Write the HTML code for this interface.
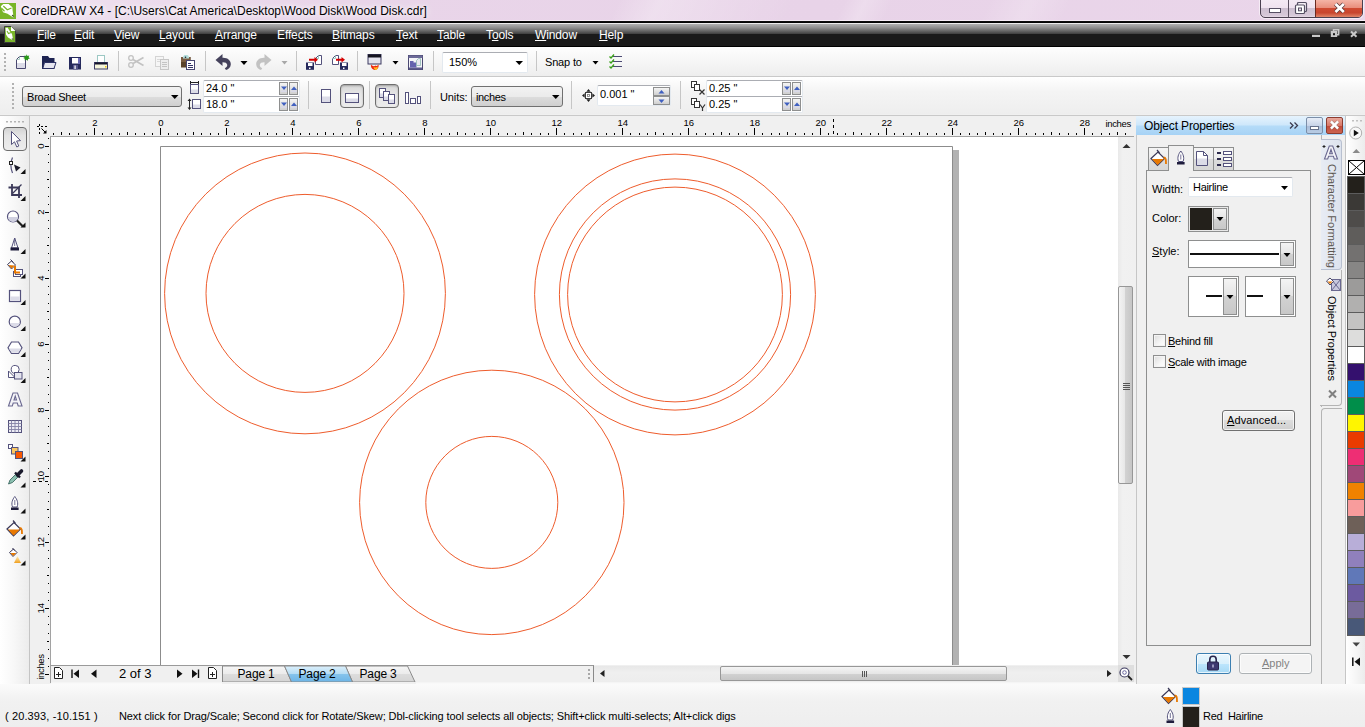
<!DOCTYPE html>
<html><head><meta charset="utf-8"><title>CorelDRAW X4</title>
<style>
*{box-sizing:border-box;margin:0;padding:0}
html,body{width:1365px;height:727px;overflow:hidden;background:#f0f0f0;font-family:"Liberation Sans",sans-serif;font-size:11px;color:#000}
.abs{position:absolute}
#title{position:absolute;left:0;top:0;width:1365px;height:21px;background:linear-gradient(115deg,rgba(255,255,255,0) 0,rgba(255,255,255,0) 45%,rgba(255,255,255,.28) 48%,rgba(255,255,255,.10) 54%,rgba(255,255,255,0) 58%,rgba(255,255,255,0) 61.500%,rgba(255,255,255,.22) 63%,rgba(255,255,255,0) 65%,rgba(255,255,255,0) 72%,rgba(255,255,255,.2) 75%,rgba(255,255,255,0) 78%),linear-gradient(90deg,#f2e6f2 0,#eddded 8%,#e9d5e9 25%,#e8d3e8 60%,#ead6ea 100%);border-bottom:1px solid #f6ecf6}
#title .t{position:absolute;left:21px;top:3.5px;font-size:12px;letter-spacing:0.01px;line-height:15px;white-space:nowrap;color:#000;text-shadow:0 0 5px #fff,0 0 8px #fff}
#menu{position:absolute;left:0;top:21px;width:1365px;height:26px;background:linear-gradient(#111 0,#000 2px,#ececec 2px,#ececec 3px,#b2b2b2 3px,#8c8c8c 7px,#3e3e3e 13px,#1a1a1a 13px,#1a1a1a 25px,#000 25px)}
#menu span{position:absolute;top:6.5px;color:#fff;font-size:12px;letter-spacing:-0.12px;line-height:15px;white-space:nowrap}
#menu u{text-decoration:underline;text-underline-offset:1px}
#tb1{position:absolute;left:0;top:47px;width:1365px;height:29px;background:linear-gradient(#fefefe,#f5f5f5 55%,#eeeeee)}
#tb2{position:absolute;left:0;top:76px;width:1365px;height:38px;background:linear-gradient(#ffffff,#f4f4f4 40%,#eeeeee);border-top:1px solid #c9c9c9}
#below{position:absolute;left:0;top:114px;width:1365px;height:2px;background:#f0f0f0;border-bottom:1px solid #c9c9c9}
.grip{position:absolute;width:3px;background-image:repeating-linear-gradient(#b4b4b4 0,#b4b4b4 2px,transparent 2px,transparent 4px)}
.sep{position:absolute;width:1px;background:#c6c6c6}
.combo{position:absolute;background:#fff;border:1px solid #e3e9ef;border-top-color:#abadb3;border-radius:2px}
.btncombo{position:absolute;border:1px solid #707070;border-radius:3px;background:linear-gradient(#f2f2f2,#ebebeb 50%,#dddddd 50%,#cfcfcf)}
.txt{position:absolute;white-space:nowrap;line-height:13px}
.arr{position:absolute;width:0;height:0;border-left:4px solid transparent;border-right:4px solid transparent;border-top:4px solid #000}
#toolbox{position:absolute;left:0;top:116px;width:30px;height:568px;background:linear-gradient(90deg,#ffffff,#f8f8f8 45%,#ececec);border-right:1px solid #c4c4c4}
#workarea{position:absolute;left:51px;top:137px;width:1067px;height:528px;background:#fff}
#canvas{position:absolute;left:0;top:0;width:1365px;height:727px;pointer-events:none}
#status{position:absolute;left:0;top:684px;width:1365px;height:43px;background:linear-gradient(#fbfbfb,#f1f1f1 40%,#eeeeee)}
#palettebg{position:absolute;left:1345px;top:116px;width:20px;height:568px;background:linear-gradient(90deg,#ffffff,#f6f6f6 50%,#ececec);border-left:1px solid #c6c6c6}
#palette{position:absolute;left:1347px;top:176px;width:18px;height:460px}
.spin{position:absolute;width:9px;height:13px;border:1px solid #8e8f8f;background:linear-gradient(#f4f4f4,#e2e2e2 50%,#cfcfcf)}
.spinh{position:absolute;width:17px;height:9px;border:1px solid #8e8f8f;background:linear-gradient(#f4f4f4,#e2e2e2 50%,#cfcfcf)}
.pressed{position:absolute;border:1px solid #6e6e6e;border-radius:4px;background:linear-gradient(#d6d6d6,#e6e6e6 40%,#ececec);box-shadow:inset 0 1px 2px rgba(0,0,0,.25)}
#vscroll{position:absolute;left:1118px;top:137px;width:16px;height:528px;background:linear-gradient(90deg,#e9e9e9,#f1f1f1 30%,#f0f0f0)}
#vthumb{position:absolute;left:0;top:149px;width:15px;height:198px;border:1px solid #979797;border-radius:2px;background:linear-gradient(90deg,#f4f4f4,#e6e6e6 50%,#d2d2d2 50%,#c6c6c6)}
#hscroll{position:absolute;left:594px;top:666px;width:524px;height:16px;background:linear-gradient(#e8e8e8,#efefef 40%,#ededed)}
#hthumb{position:absolute;left:126px;top:0px;width:287px;height:15px;border:1px solid #979797;border-radius:2px;background:linear-gradient(#f4f4f4,#e6e6e6 50%,#d2d2d2 50%,#c6c6c6)}
#pagenav{position:absolute;left:51px;top:665px;width:543px;height:17px;background:#f0f0f0;border-top:1px solid #9a9a9a;border-right:1px solid #8a8a8a}
#navcorner{position:absolute;left:1118px;top:665px;width:16px;height:17px;background:#dedede}
.ptxt{position:absolute;top:667px;font-size:12px;line-height:14px;white-space:nowrap}
#docker{position:absolute;left:1136px;top:116px;width:210px;height:568px;background:#f0f0f0}
#dhead{position:absolute;left:0;top:0;width:210px;height:19px;background:linear-gradient(#e6f3fd,#cfe8fb 45%,#b4dbf8 55%,#a6d2f5)}
#dhead .t{position:absolute;left:8px;top:2.700px;letter-spacing:-0.14px;font-size:12px;line-height:15px;white-space:nowrap}
#dpanel{position:absolute;left:10px;top:54px;width:165px;height:476px;border:1px solid #8e8f8f;background:#f0f0f0}
.dtab{position:absolute;border:1px solid #8e8f8f;border-bottom:none;background:linear-gradient(#f4f4f4,#ececec 50%,#dcdcdc 50%,#d6d6d6)}
.dlabel{position:absolute;white-space:nowrap;line-height:13px;font-size:11px}
.wcombo{position:absolute;background:#fff;border:1px solid #e3e9ef;border-top-color:#abadb3;border-radius:2px}
.wbox{position:absolute;background:#fff;border:1px solid #8e8f8f}
.ddbtn{position:absolute;border:1px solid #8e8f8f;background:linear-gradient(#f4f4f4,#e4e4e4 50%,#d2d2d2 50%,#c8c8c8)}
.chk{position:absolute;width:13px;height:13px;border:1px solid #8e8f8f;background:linear-gradient(135deg,#dcdcdc,#f6f6f6 60%,#fff);box-shadow:inset 0 0 0 1px #f4f4f4}
.btn{position:absolute;border:1px solid #707070;border-radius:3px;background:linear-gradient(#f2f2f2,#ebebeb 50%,#dddddd 50%,#cfcfcf);box-shadow:inset 0 0 0 1px rgba(255,255,255,.7)}
#vtabs{position:absolute;left:1321px;top:135px;width:25px;height:549px;background:#f0f0f0}
.vtxt{position:absolute;white-space:nowrap;font-size:11px;line-height:12px;transform-origin:0 0;transform:rotate(90deg)}
</style></head>
<body>
<div id="title"><div class="abs" style="left:1260px;top:-1px;width:103px;height:19px;border:1px solid #4a4050;border-radius:0 0 5px 5px;background:linear-gradient(#f4eaf4,#efe2ef 48%,#cdbfd0 50%,#d6c8d8 90%,#e6dae6);box-shadow:0 0 0 1px rgba(255,255,255,.55)"></div>
<div class="abs" style="left:1315px;top:0;width:47px;height:17px;border-radius:0 0 4px 0;background:linear-gradient(#f4b4a6,#e88c7a 48%,#cf4a32 50%,#c8452e 75%,#e08468)"></div>
<div class="abs" style="left:1288px;top:0;width:1px;height:17px;background:#5a5060"></div>
<div class="abs" style="left:1315px;top:0;width:1px;height:17px;background:#6a2a20"></div>
<div class="t">CorelDRAW X4 - [C:\Users\Cat America\Desktop\Wood Disk\Wood Disk.cdr]</div></div>
<div id="menu">
<span style="left:37px"><u>F</u>ile</span>
<span style="left:74px"><u>E</u>dit</span>
<span style="left:114px"><u>V</u>iew</span>
<span style="left:159px"><u>L</u>ayout</span>
<span style="left:215px"><u>A</u>rrange</span>
<span style="left:277px">Effe<u>c</u>ts</span>
<span style="left:332px"><u>B</u>itmaps</span>
<span style="left:396px"><u>T</u>ext</span>
<span style="left:437px"><u>T</u>able</span>
<span style="left:486px">T<u>o</u>ols</span>
<span style="left:535px"><u>W</u>indow</span>
<span style="left:599px"><u>H</u>elp</span>
</div>
<div id="tb1">
<div class="sep" style="left:118px;top:4px;height:20px"></div>
<div class="sep" style="left:205px;top:4px;height:20px"></div>
<div class="sep" style="left:296px;top:4px;height:20px"></div>
<div class="sep" style="left:357px;top:4px;height:20px"></div>
<div class="sep" style="left:433px;top:4px;height:20px"></div>
<div class="sep" style="left:536px;top:4px;height:20px"></div>
<div class="combo" style="left:442px;top:5px;width:86px;height:21px"></div>
<div class="txt" style="left:449px;top:9px">150%</div>
<div class="txt" style="letter-spacing:-0.17px;left:545px;top:9px">Snap to</div>
</div>
<div id="tb2">
<div class="btncombo" style="left:22px;top:9px;width:160px;height:21px"></div>
<div class="txt" style="letter-spacing:-0.2px;left:27px;top:13.5px">Broad Sheet</div>
<div class="combo" style="left:203px;top:3px;width:97px;height:17px"></div>
<div class="combo" style="left:203px;top:19px;width:97px;height:17px"></div>
<div class="txt" style="left:206px;top:5px">24.0 "</div>
<div class="txt" style="left:206px;top:21px">18.0 "</div>
<div class="spin" style="left:279px;top:5px"></div><div class="spin" style="left:289px;top:5px"></div>
<div class="spin" style="left:279px;top:21px"></div><div class="spin" style="left:289px;top:21px"></div>
<div class="sep" style="left:308px;top:4px;height:28px"></div>
<div class="pressed" style="left:340px;top:7px;width:24px;height:24px"></div>
<div class="sep" style="left:369px;top:4px;height:28px"></div>
<div class="pressed" style="left:375px;top:7px;width:24px;height:24px"></div>
<div class="sep" style="left:430px;top:4px;height:28px"></div>
<div class="txt" style="letter-spacing:-0.1px;left:440px;top:13.5px">Units:</div>
<div class="btncombo" style="left:471px;top:9px;width:92px;height:21px"></div>
<div class="txt" style="letter-spacing:-0.35px;left:476px;top:13.5px">inches</div>
<div class="sep" style="left:571px;top:4px;height:28px"></div>
<div class="combo" style="left:597px;top:8px;width:74px;height:21px"></div>
<div class="txt" style="left:600px;top:11px">0.001 "</div>
<div class="spinh" style="left:653px;top:10px"></div><div class="spinh" style="left:653px;top:19px"></div>
<div class="sep" style="left:680px;top:4px;height:28px"></div>
<div class="combo" style="left:706px;top:3px;width:97px;height:17px"></div>
<div class="combo" style="left:706px;top:19px;width:97px;height:17px"></div>
<div class="txt" style="left:709px;top:5px">0.25 "</div>
<div class="txt" style="left:709px;top:21px">0.25 "</div>
<div class="spin" style="left:782px;top:5px"></div><div class="spin" style="left:792px;top:5px"></div>
<div class="spin" style="left:782px;top:21px"></div><div class="spin" style="left:792px;top:21px"></div>
</div>
<div id="below"></div>
<div id="toolbox"></div>
<div id="workarea"></div>
<div id="vscroll"><div id="vthumb"></div></div>
<div id="pagenav"></div>
<div id="hscroll"><div id="hthumb"></div></div>
<div id="navcorner"></div>
<div class="abs" style="left:51px;top:682px;width:1085px;height:2px;background:linear-gradient(#f3f3f3,#fbfbfb)"></div>
<div class="ptxt" style="left:119px;font-size:13px;top:666px;line-height:15px">2 of 3</div>
<div id="docker">
<div id="dhead"><div class="t">Object Properties</div>
<div class="abs" style="left:170px;top:1px;width:17px;height:17px;border:1px solid #7b8ea8;border-radius:2px;background:linear-gradient(#e8eef8,#c8d4e8 50%,#a8bcd8 50%,#b8cce4)"></div>
<div class="abs" style="left:174px;top:10px;width:9px;height:4px;background:#fff;border:1px solid #66728c"></div>
<div class="abs" style="left:190px;top:1px;width:17px;height:17px;border:1px solid #8c3c30;border-radius:2px;background:linear-gradient(#e8a89c,#d87868 50%,#c04838 50%,#cc6450)"></div>
</div>
<div class="abs" style="left:0px;top:19px;width:1px;height:549px;background:#c6c6c6"></div>
<div class="dtab" style="left:12px;top:31px;width:21px;height:24px"></div>
<div class="dtab" style="left:57px;top:31px;width:21px;height:24px"></div>
<div class="dtab" style="left:77px;top:31px;width:21px;height:24px"></div>
<div id="dpanel"></div>
<div class="abs" style="left:32px;top:29px;width:26px;height:26px;border:1px solid #8e8f8f;border-bottom:none;background:#f0f0f0"></div>
<div class="dlabel" style="left:16px;top:66.700px">Width:</div>
<div class="wcombo" style="left:52px;top:61px;width:105px;height:20px"></div>
<div class="dlabel" style="letter-spacing:-0.3px;left:57px;top:65px">Hairline</div>
<div class="dlabel" style="left:16px;top:96px">Color:</div>
<div class="wbox" style="left:52px;top:90px;width:41px;height:26px;background:#e8e8e8"></div>
<div class="abs" style="left:54px;top:92px;width:22px;height:22px;background:#23201b"></div>
<div class="ddbtn" style="left:77px;top:92px;width:14px;height:22px"></div>
<div class="dlabel" style="left:16px;top:129px"><u>S</u>tyle:</div>
<div class="wbox" style="left:52px;top:124px;width:108px;height:28px"></div>
<div class="abs" style="left:54px;top:137px;width:89px;height:2px;background:#111"></div>
<div class="ddbtn" style="left:144px;top:126px;width:14px;height:24px"></div>
<div class="wbox" style="left:52px;top:160px;width:51px;height:41px"></div>
<div class="abs" style="left:70px;top:179px;width:16px;height:2px;background:#111"></div>
<div class="ddbtn" style="left:87px;top:162px;width:14px;height:37px"></div>
<div class="wbox" style="left:109px;top:160px;width:51px;height:41px"></div>
<div class="abs" style="left:111px;top:179px;width:16px;height:2px;background:#111"></div>
<div class="ddbtn" style="left:144px;top:162px;width:14px;height:37px"></div>
<div class="chk" style="left:17px;top:218px"></div>
<div class="dlabel" style="letter-spacing:-0.27px;left:32px;top:219px"><u>B</u>ehind fill</div>
<div class="chk" style="left:17px;top:239px"></div>
<div class="dlabel" style="letter-spacing:-0.29px;left:32px;top:240px"><u>S</u>cale with image</div>
<div class="btn" style="left:86px;top:294px;width:73px;height:21px"></div>
<div class="dlabel" style="letter-spacing:0.1px;left:91px;top:298px"><u>A</u>dvanced...</div>
<div class="btn" style="left:60px;top:537px;width:35px;height:21px;border-color:#3c7fb1;background:linear-gradient(#eaf6fd,#d9f0fc 50%,#bee6fd 50%,#a7d9f5)"></div>
<div class="btn" style="left:103px;top:537px;width:73px;height:21px;border-color:#adb2b5;background:#f4f4f4"></div>
<div class="dlabel" style="left:126px;top:541px;color:#838383"><u>A</u>pply</div>
</div>
<div id="vtabs">
<div class="abs" style="left:0;top:0;width:1px;height:272px;background:#b4b4b4"></div>
<div class="abs" style="left:0;top:4px;width:21px;height:131px;border:1px solid #b8c0d0;border-left:none;border-radius:0 4px 4px 0;background:linear-gradient(90deg,#e8ecf4,#dde3ee)"></div>
<div class="abs" style="left:-1px;top:135px;width:22px;height:136px;border:1px solid #b4b4b4;border-left:none;border-top:none;border-radius:0 0 4px 0;background:#f0f0f0"></div>
<div class="abs" style="left:0;top:273px;width:21px;height:300px;border:1px solid #b4b4b4;border-right:none;border-bottom:none;border-radius:4px 0 0 0"></div>
<div class="vtxt" style="left:17px;top:29px;color:#5c5650">Character Formatting</div>
<div class="vtxt" style="left:17px;top:161px">Object Properties</div>
</div>

<div id="palettebg"></div>
<div id="palette">
<div style="position:absolute;left:0;top:0px;width:18px;height:18px;border:1px solid #5c5c5c;background:#23201b"></div>
<div style="position:absolute;left:0;top:17px;width:18px;height:18px;border:1px solid #5c5c5c;background:#3b3936"></div>
<div style="position:absolute;left:0;top:34px;width:18px;height:18px;border:1px solid #5c5c5c;background:#4e4c4a"></div>
<div style="position:absolute;left:0;top:51px;width:18px;height:18px;border:1px solid #5c5c5c;background:#5f5d5b"></div>
<div style="position:absolute;left:0;top:68px;width:18px;height:18px;border:1px solid #5c5c5c;background:#737170"></div>
<div style="position:absolute;left:0;top:85px;width:18px;height:18px;border:1px solid #5c5c5c;background:#878685"></div>
<div style="position:absolute;left:0;top:102px;width:18px;height:18px;border:1px solid #5c5c5c;background:#9c9b9a"></div>
<div style="position:absolute;left:0;top:119px;width:18px;height:18px;border:1px solid #5c5c5c;background:#b1b0af"></div>
<div style="position:absolute;left:0;top:136px;width:18px;height:18px;border:1px solid #5c5c5c;background:#c4c3c2"></div>
<div style="position:absolute;left:0;top:153px;width:18px;height:18px;border:1px solid #5c5c5c;background:#dddddc"></div>
<div style="position:absolute;left:0;top:170px;width:18px;height:18px;border:1px solid #5c5c5c;background:#ffffff"></div>
<div style="position:absolute;left:0;top:187px;width:18px;height:18px;border:1px solid #5c5c5c;background:#34106e"></div>
<div style="position:absolute;left:0;top:204px;width:18px;height:18px;border:1px solid #5c5c5c;background:#0a86e0"></div>
<div style="position:absolute;left:0;top:221px;width:18px;height:18px;border:1px solid #5c5c5c;background:#008e4a"></div>
<div style="position:absolute;left:0;top:238px;width:18px;height:18px;border:1px solid #5c5c5c;background:#fff500"></div>
<div style="position:absolute;left:0;top:255px;width:18px;height:18px;border:1px solid #5c5c5c;background:#ea3b00"></div>
<div style="position:absolute;left:0;top:272px;width:18px;height:18px;border:1px solid #5c5c5c;background:#ee2e74"></div>
<div style="position:absolute;left:0;top:289px;width:18px;height:18px;border:1px solid #5c5c5c;background:#a04878"></div>
<div style="position:absolute;left:0;top:306px;width:18px;height:18px;border:1px solid #5c5c5c;background:#f08200"></div>
<div style="position:absolute;left:0;top:323px;width:18px;height:18px;border:1px solid #5c5c5c;background:#f89c9c"></div>
<div style="position:absolute;left:0;top:340px;width:18px;height:18px;border:1px solid #5c5c5c;background:#6e6058"></div>
<div style="position:absolute;left:0;top:357px;width:18px;height:18px;border:1px solid #5c5c5c;background:#b8aed8"></div>
<div style="position:absolute;left:0;top:374px;width:18px;height:18px;border:1px solid #5c5c5c;background:#9080bc"></div>
<div style="position:absolute;left:0;top:391px;width:18px;height:18px;border:1px solid #5c5c5c;background:#6078b8"></div>
<div style="position:absolute;left:0;top:408px;width:18px;height:18px;border:1px solid #5c5c5c;background:#6c5aa0"></div>
<div style="position:absolute;left:0;top:425px;width:18px;height:18px;border:1px solid #5c5c5c;background:#786c98"></div>
<div style="position:absolute;left:0;top:442px;width:18px;height:18px;border:1px solid #5c5c5c;background:#485878"></div>
</div>
<div id="status">
<div class="txt" style="letter-spacing:0.12px;left:5px;top:26px">( 20.393, -10.151 )</div>
<div class="txt" style="letter-spacing:-0.108px;left:119px;top:26px">Next click for Drag/Scale; Second click for Rotate/Skew; Dbl-clicking tool selects all objects; Shift+click multi-selects; Alt+click digs</div>
<div class="txt" style="left:1203px;top:26px;letter-spacing:-0.28px">Red&nbsp; Hairline</div>
</div>

<svg id="canvas" width="1365" height="727" viewBox="0 0 1365 727">
<!-- rulers -->
<rect x="31" y="116" width="1103" height="20" fill="#f0f0f0"/>
<rect x="31" y="116" width="19" height="568" fill="#f0f0f0"/>
<rect x="50" y="136" width="1084" height="1" fill="#a2a2a2"/>
<rect x="50" y="136" width="1" height="547" fill="#a2a2a2"/>
<g fill="#000" shape-rendering="crispEdges">
<rect x="53" y="133" width="1" height="2"/>
<rect x="61" y="132" width="1" height="3"/>
<rect x="69" y="133" width="1" height="2"/>
<rect x="78" y="133" width="1" height="2"/>
<rect x="86" y="133" width="1" height="2"/>
<rect x="94" y="128" width="1" height="7"/>
<rect x="102" y="133" width="1" height="2"/>
<rect x="111" y="133" width="1" height="2"/>
<rect x="119" y="133" width="1" height="2"/>
<rect x="127" y="132" width="1" height="3"/>
<rect x="135" y="133" width="1" height="2"/>
<rect x="144" y="133" width="1" height="2"/>
<rect x="152" y="133" width="1" height="2"/>
<rect x="160" y="128" width="1" height="7"/>
<rect x="168" y="133" width="1" height="2"/>
<rect x="177" y="133" width="1" height="2"/>
<rect x="185" y="133" width="1" height="2"/>
<rect x="193" y="132" width="1" height="3"/>
<rect x="201" y="133" width="1" height="2"/>
<rect x="210" y="133" width="1" height="2"/>
<rect x="218" y="133" width="1" height="2"/>
<rect x="226" y="128" width="1" height="7"/>
<rect x="234" y="133" width="1" height="2"/>
<rect x="243" y="133" width="1" height="2"/>
<rect x="251" y="133" width="1" height="2"/>
<rect x="259" y="132" width="1" height="3"/>
<rect x="267" y="133" width="1" height="2"/>
<rect x="276" y="133" width="1" height="2"/>
<rect x="284" y="133" width="1" height="2"/>
<rect x="292" y="128" width="1" height="7"/>
<rect x="300" y="133" width="1" height="2"/>
<rect x="309" y="133" width="1" height="2"/>
<rect x="317" y="133" width="1" height="2"/>
<rect x="325" y="132" width="1" height="3"/>
<rect x="333" y="133" width="1" height="2"/>
<rect x="342" y="133" width="1" height="2"/>
<rect x="350" y="133" width="1" height="2"/>
<rect x="358" y="128" width="1" height="7"/>
<rect x="366" y="133" width="1" height="2"/>
<rect x="375" y="133" width="1" height="2"/>
<rect x="383" y="133" width="1" height="2"/>
<rect x="391" y="132" width="1" height="3"/>
<rect x="399" y="133" width="1" height="2"/>
<rect x="408" y="133" width="1" height="2"/>
<rect x="416" y="133" width="1" height="2"/>
<rect x="424" y="128" width="1" height="7"/>
<rect x="432" y="133" width="1" height="2"/>
<rect x="441" y="133" width="1" height="2"/>
<rect x="449" y="133" width="1" height="2"/>
<rect x="457" y="132" width="1" height="3"/>
<rect x="465" y="133" width="1" height="2"/>
<rect x="474" y="133" width="1" height="2"/>
<rect x="482" y="133" width="1" height="2"/>
<rect x="490" y="128" width="1" height="7"/>
<rect x="498" y="133" width="1" height="2"/>
<rect x="507" y="133" width="1" height="2"/>
<rect x="515" y="133" width="1" height="2"/>
<rect x="523" y="132" width="1" height="3"/>
<rect x="531" y="133" width="1" height="2"/>
<rect x="540" y="133" width="1" height="2"/>
<rect x="548" y="133" width="1" height="2"/>
<rect x="556" y="128" width="1" height="7"/>
<rect x="564" y="133" width="1" height="2"/>
<rect x="573" y="133" width="1" height="2"/>
<rect x="581" y="133" width="1" height="2"/>
<rect x="589" y="132" width="1" height="3"/>
<rect x="597" y="133" width="1" height="2"/>
<rect x="606" y="133" width="1" height="2"/>
<rect x="614" y="133" width="1" height="2"/>
<rect x="622" y="128" width="1" height="7"/>
<rect x="630" y="133" width="1" height="2"/>
<rect x="639" y="133" width="1" height="2"/>
<rect x="647" y="133" width="1" height="2"/>
<rect x="655" y="132" width="1" height="3"/>
<rect x="663" y="133" width="1" height="2"/>
<rect x="672" y="133" width="1" height="2"/>
<rect x="680" y="133" width="1" height="2"/>
<rect x="688" y="128" width="1" height="7"/>
<rect x="696" y="133" width="1" height="2"/>
<rect x="705" y="133" width="1" height="2"/>
<rect x="713" y="133" width="1" height="2"/>
<rect x="721" y="132" width="1" height="3"/>
<rect x="729" y="133" width="1" height="2"/>
<rect x="738" y="133" width="1" height="2"/>
<rect x="746" y="133" width="1" height="2"/>
<rect x="754" y="128" width="1" height="7"/>
<rect x="762" y="133" width="1" height="2"/>
<rect x="771" y="133" width="1" height="2"/>
<rect x="779" y="133" width="1" height="2"/>
<rect x="787" y="132" width="1" height="3"/>
<rect x="795" y="133" width="1" height="2"/>
<rect x="804" y="133" width="1" height="2"/>
<rect x="812" y="133" width="1" height="2"/>
<rect x="820" y="128" width="1" height="7"/>
<rect x="828" y="133" width="1" height="2"/>
<rect x="837" y="133" width="1" height="2"/>
<rect x="845" y="133" width="1" height="2"/>
<rect x="853" y="132" width="1" height="3"/>
<rect x="861" y="133" width="1" height="2"/>
<rect x="870" y="133" width="1" height="2"/>
<rect x="878" y="133" width="1" height="2"/>
<rect x="886" y="128" width="1" height="7"/>
<rect x="894" y="133" width="1" height="2"/>
<rect x="903" y="133" width="1" height="2"/>
<rect x="911" y="133" width="1" height="2"/>
<rect x="919" y="132" width="1" height="3"/>
<rect x="927" y="133" width="1" height="2"/>
<rect x="936" y="133" width="1" height="2"/>
<rect x="944" y="133" width="1" height="2"/>
<rect x="952" y="128" width="1" height="7"/>
<rect x="960" y="133" width="1" height="2"/>
<rect x="969" y="133" width="1" height="2"/>
<rect x="977" y="133" width="1" height="2"/>
<rect x="985" y="132" width="1" height="3"/>
<rect x="993" y="133" width="1" height="2"/>
<rect x="1002" y="133" width="1" height="2"/>
<rect x="1010" y="133" width="1" height="2"/>
<rect x="1018" y="128" width="1" height="7"/>
<rect x="1026" y="133" width="1" height="2"/>
<rect x="1035" y="133" width="1" height="2"/>
<rect x="1043" y="133" width="1" height="2"/>
<rect x="1051" y="132" width="1" height="3"/>
<rect x="1059" y="133" width="1" height="2"/>
<rect x="1068" y="133" width="1" height="2"/>
<rect x="1076" y="133" width="1" height="2"/>
<rect x="1084" y="128" width="1" height="7"/>
<rect x="1092" y="133" width="1" height="2"/>
<rect x="1101" y="133" width="1" height="2"/>
<rect x="1109" y="133" width="1" height="2"/>
<rect x="1117" y="132" width="1" height="3"/>
<rect x="1125" y="133" width="1" height="2"/>
<rect x="48" y="138" width="1" height="1"/>
<rect x="45" y="146" width="4" height="1"/>
<rect x="48" y="154" width="1" height="1"/>
<rect x="48" y="162" width="1" height="1"/>
<rect x="48" y="171" width="1" height="1"/>
<rect x="47" y="179" width="2" height="1"/>
<rect x="48" y="187" width="1" height="1"/>
<rect x="48" y="196" width="1" height="1"/>
<rect x="48" y="204" width="1" height="1"/>
<rect x="45" y="212" width="4" height="1"/>
<rect x="48" y="220" width="1" height="1"/>
<rect x="48" y="228" width="1" height="1"/>
<rect x="48" y="237" width="1" height="1"/>
<rect x="47" y="245" width="2" height="1"/>
<rect x="48" y="253" width="1" height="1"/>
<rect x="48" y="262" width="1" height="1"/>
<rect x="48" y="270" width="1" height="1"/>
<rect x="45" y="278" width="4" height="1"/>
<rect x="48" y="286" width="1" height="1"/>
<rect x="48" y="294" width="1" height="1"/>
<rect x="48" y="303" width="1" height="1"/>
<rect x="47" y="311" width="2" height="1"/>
<rect x="48" y="319" width="1" height="1"/>
<rect x="48" y="328" width="1" height="1"/>
<rect x="48" y="336" width="1" height="1"/>
<rect x="45" y="344" width="4" height="1"/>
<rect x="48" y="352" width="1" height="1"/>
<rect x="48" y="360" width="1" height="1"/>
<rect x="48" y="369" width="1" height="1"/>
<rect x="47" y="377" width="2" height="1"/>
<rect x="48" y="385" width="1" height="1"/>
<rect x="48" y="394" width="1" height="1"/>
<rect x="48" y="402" width="1" height="1"/>
<rect x="45" y="410" width="4" height="1"/>
<rect x="48" y="418" width="1" height="1"/>
<rect x="48" y="426" width="1" height="1"/>
<rect x="48" y="435" width="1" height="1"/>
<rect x="47" y="443" width="2" height="1"/>
<rect x="48" y="451" width="1" height="1"/>
<rect x="48" y="460" width="1" height="1"/>
<rect x="48" y="468" width="1" height="1"/>
<rect x="45" y="476" width="4" height="1"/>
<rect x="48" y="484" width="1" height="1"/>
<rect x="48" y="492" width="1" height="1"/>
<rect x="48" y="501" width="1" height="1"/>
<rect x="47" y="509" width="2" height="1"/>
<rect x="48" y="517" width="1" height="1"/>
<rect x="48" y="526" width="1" height="1"/>
<rect x="48" y="534" width="1" height="1"/>
<rect x="45" y="542" width="4" height="1"/>
<rect x="48" y="550" width="1" height="1"/>
<rect x="48" y="558" width="1" height="1"/>
<rect x="48" y="567" width="1" height="1"/>
<rect x="47" y="575" width="2" height="1"/>
<rect x="48" y="583" width="1" height="1"/>
<rect x="48" y="592" width="1" height="1"/>
<rect x="48" y="600" width="1" height="1"/>
<rect x="45" y="608" width="4" height="1"/>
<rect x="48" y="616" width="1" height="1"/>
<rect x="48" y="624" width="1" height="1"/>
<rect x="48" y="633" width="1" height="1"/>
<rect x="47" y="641" width="2" height="1"/>
<rect x="48" y="649" width="1" height="1"/>
<rect x="48" y="658" width="1" height="1"/>
<rect x="48" y="666" width="1" height="1"/>
<rect x="45" y="674" width="4" height="1"/>
</g>
<g font-family="Liberation Sans, sans-serif" font-size="9.5" text-anchor="middle" fill="#000">
<text x="94.8" y="126.4">2</text>
<text x="160.8" y="126.4">0</text>
<text x="226.8" y="126.4">2</text>
<text x="292.8" y="126.4">4</text>
<text x="358.8" y="126.4">6</text>
<text x="424.8" y="126.4">8</text>
<text x="490.8" y="126.4">10</text>
<text x="556.8" y="126.4">12</text>
<text x="622.8" y="126.4">14</text>
<text x="688.8" y="126.4">16</text>
<text x="754.8" y="126.4">18</text>
<text x="820.8" y="126.4">20</text>
<text x="886.8" y="126.4">22</text>
<text x="952.8" y="126.4">24</text>
<text x="1018.8" y="126.4">26</text>
<text x="1084.8" y="126.4">28</text>
<text transform="translate(43.8,146.2) rotate(-90)" x="0" y="0">0</text>
<text transform="translate(43.8,212.2) rotate(-90)" x="0" y="0">2</text>
<text transform="translate(43.8,278.2) rotate(-90)" x="0" y="0">4</text>
<text transform="translate(43.8,344.2) rotate(-90)" x="0" y="0">6</text>
<text transform="translate(43.8,410.2) rotate(-90)" x="0" y="0">8</text>
<text transform="translate(43.8,476.2) rotate(-90)" x="0" y="0">10</text>
<text transform="translate(43.8,542.2) rotate(-90)" x="0" y="0">12</text>
<text transform="translate(43.8,608.2) rotate(-90)" x="0" y="0">14</text>
</g>

<!-- ===== toolbar1 icons ===== -->
<g id="tb1icons">
<g fill="#b2b2b2"><rect x="4" y="53" width="2" height="2"/><rect x="4" y="57" width="2" height="2"/><rect x="4" y="61" width="2" height="2"/><rect x="4" y="65" width="2" height="2"/><rect x="4" y="69" width="2" height="2"/></g>
<!-- new -->
<path d="M19.5 56.5 H25.5 V68.5 H16.5 V59.5 Z" fill="#fff" stroke="#4a4870"/>
<rect x="17" y="63" width="8" height="5" fill="#dcdce8"/>
<path d="M16.5 59.5 H19.5 V56.5" fill="none" stroke="#a8c8c0"/>
<path d="M26.5 54.3 l1 1.6 1.8-.4 -.7 1.7 1.3 1.3 -1.8.4 -.3 1.8 -1.5-1 -1.6.9 .1-1.8 -1.6-.9 1.6-.8 -.1-1.8 1.4 1z" fill="#2a9818"/>
<!-- open -->
<path d="M42 56 h6 l1.5 2 h5 v11 h-12.5 z" fill="#1e2452"/>
<path d="M44.5 62.5 H56 L54 68.5 H42.8 Z" fill="#e6e6f0" stroke="#2c3164" stroke-width="1"/>
<!-- save -->
<rect x="69" y="57" width="12" height="12.5" fill="#25295c"/>
<rect x="78" y="58" width="2" height="6" fill="#6c6ab4"/>
<rect x="72" y="58" width="6" height="5.5" fill="#fff"/>
<rect x="73" y="65" width="5" height="4.5" fill="#54548a"/>
<rect x="74.5" y="65.5" width="1.2" height="3.5" fill="#fff"/>
<!-- print -->
<rect x="97.5" y="55.5" width="7" height="8" fill="#fff" stroke="#9cc8c4"/>
<rect x="94.5" y="62.5" width="13" height="6.5" fill="#f6f6dc" stroke="#3c3c64"/>
<rect x="95" y="62.5" width="12" height="2" fill="#16162c"/>
<rect x="105" y="66" width="1.5" height="1.5" fill="#f0c800"/>
<!-- cut (disabled) -->
<g fill="none" stroke="#c2c2c2" stroke-width="1.3"><circle cx="131" cy="58" r="2.3"/><circle cx="131" cy="65" r="2.3"/><path d="M133 59.5 L143.5 65.5 M133 63.5 L143.5 57.5" stroke-width="1.6"/></g>
<!-- copy (disabled) -->
<rect x="155.5" y="56.500" width="8" height="10" fill="#f6f6f6" stroke="#d4d4d4"/>
<rect x="160.500" y="59.500" width="8" height="10" fill="#ededed" stroke="#c6c6c6"/>
<path d="M162 62.500h5M162 64.500h5M162 66.500h5" stroke="#c4c4c4"/>
<path d="M157 59.500h3M157 61.500h3" stroke="#dadada"/>
<!-- paste -->
<rect x="181" y="57" width="9.5" height="10.5" fill="#5a432c"/>
<rect x="181" y="57" width="9.5" height="5" fill="#7a5c42"/>
<path d="M183 58.500 v-2 l1.500-1.500 h3 l1.500 1.500 v2 z" fill="#b4deda"/>
<circle cx="185.500" cy="57.300" r="0.800" fill="#223"/>
<rect x="186.500" y="60.500" width="8" height="9" fill="#fff" stroke="#4a4872"/>
<path d="M188 63.500h3M188 65.500h5M188 67.500h5" stroke="#333366"/>
<!-- undo -->
<path d="M215.500 60 L222.500 54 V57.800 C227.500 57.500 231 60.500 230.800 64.500 C230.600 67.300 228.600 69.200 226 69.900 L224.800 68.300 C226.600 67.500 227.400 66.200 227.200 64.800 C226.900 63 225 62.200 222.500 62.300 V66 Z" fill="#45425c"/>
<path d="M240.500 61 h7 l-3.500 4 z" fill="#000"/>
<!-- redo (disabled) -->
<path d="M271.500 60 L264.500 54 V57.800 C259.500 57.500 256 60.500 256.200 64.500 C256.400 67.300 258.400 69.200 261 69.900 L262.200 68.300 C260.400 67.500 259.600 66.200 259.800 64.800 C260.100 63 262 62.200 264.500 62.300 V66 Z" fill="#c2c2c2"/>
<path d="M281.500 61 h6 l-3 3.500 z" fill="#a8a8a8"/>
<!-- import -->
<path d="M318.500 55.500 H321.500 V64.500 H315.500 V58.500 Z" fill="#fff" stroke="#54527c"/>
<path d="M315.500 58.500 h3 v-3" fill="none" stroke="#9cc8c0"/>
<rect x="306" y="62.500" width="8" height="7.300" fill="#25295c"/>
<rect x="308" y="63" width="4.500" height="3" fill="#fff"/>
<rect x="309" y="67.500" width="1.500" height="1.500" fill="#fff"/>
<path d="M309 58.800 H314.500 V57 L318 59.800 L314.500 62.600 V60.800 H309 Z" fill="#d40000"/>
<!-- export -->
<path d="M335.500 55.500 H338.500 V64.500 H332.500 V58.500 Z" fill="#fff" stroke="#54527c"/>
<path d="M332.500 58.500 h3 v-3" fill="none" stroke="#9cc8c0"/>
<rect x="340" y="62.500" width="8" height="7.300" fill="#25295c"/>
<rect x="342" y="63" width="4.500" height="3" fill="#fff"/>
<rect x="343" y="67.500" width="1.500" height="1.500" fill="#fff"/>
<path d="M336 58.800 H341.500 V57 L345 59.800 L341.500 62.600 V60.800 H336 Z" fill="#d40000"/>
<!-- app launcher -->
<rect x="368" y="54.500" width="13" height="9.500" fill="#e4e4ee" stroke="#3c3a60"/>
<rect x="368" y="54.500" width="13" height="3" fill="#141420"/>
<path d="M371 64.500 C370.500 67 372 69.500 375 70 C378 69.500 379 67 378.500 64.500 C377.500 66 376.500 66.500 375.500 65.500 C374.500 66.500 372.500 66.500 371 64.500 Z" fill="#f02810"/>
<path d="M373.500 67 C374 69 375 70 376 70 C377.500 69.500 378 68 377.500 66.500 C376.500 67.500 375 67.800 373.500 67 Z" fill="#ffc020"/>
<path d="M392.500 61 h6 l-3 3.500 z" fill="#000"/>
<!-- welcome -->
<rect x="408.500" y="55.500" width="14" height="14" fill="#f4f4f8" stroke="#4a4872"/>
<rect x="408.500" y="55.500" width="14" height="2.500" fill="#6c6a98"/>
<rect x="409" y="67.500" width="13" height="2" fill="#5c5a8c"/>
<path d="M410 61 h3.500 v1.500 h3 v5 h-6.500 z" fill="#6462ae"/>
<path d="M416.500 60.500 l2-2 h2 v7 h-4 z" fill="#e8e8f0" stroke="#8cb8b0" stroke-width="0.800"/>
<!-- zoom arrow -->
<path d="M515.500 61 h7.500 l-3.750 4 z" fill="#000"/>
<!-- snap arrow -->
<path d="M592.500 61 h6 l-3 3.500 z" fill="#000"/>
<!-- options -->
<g stroke="#4c4a74" stroke-width="1"><path d="M613 56.500h9M613 61.500h9M613 66.500h9"/></g>
<g fill="none" stroke="#38a018" stroke-width="1.300"><path d="M609.500 56.500 l1.500 1.500 3-3.500"/><path d="M609.500 61.500 l1.500 1.500 3-3.500"/><path d="M609.500 66.500 l1.500 1.500 3-3.500"/></g>
</g>

<!-- ===== toolbar2 icons ===== -->
<g id="tb2icons">
<g fill="#b2b2b2"><rect x="12" y="83" width="2" height="2"/><rect x="12" y="87" width="2" height="2"/><rect x="12" y="91" width="2" height="2"/><rect x="12" y="95" width="2" height="2"/><rect x="12" y="99" width="2" height="2"/><rect x="12" y="103" width="2" height="2"/><rect x="12" y="107" width="2" height="2"/></g>
<path d="M171 95 h7.500 l-3.750 4 z" fill="#000"/>
<path d="M552 95 h7.500 l-3.750 4 z" fill="#000"/>
<!-- paper width -->
<rect x="190.500" y="84.500" width="8" height="9" fill="#fff" stroke="#54527c"/>
<rect x="191" y="89.500" width="7" height="3.500" fill="#dcdce8"/>
<path d="M190.500 81 v3 M198.500 81 v3 M190.500 82.500 h8" stroke="#222" fill="none"/>
<!-- paper height -->
<rect x="192.500" y="99.500" width="8" height="9" fill="#fff" stroke="#54527c"/>
<rect x="193" y="104.500" width="7" height="3.500" fill="#dcdce8"/>
<path d="M189.500 99.500 v9.500" stroke="#222"/><path d="M187.500 101 l2-2.500 2 2.500z M187.500 107.500 l2 2.500 2-2.500z" fill="#222"/>
<!-- spin arrows -->
<g fill="#4060c0">
<path d="M281 86.500 h6 l-3 3.500z"/><path d="M291 90 h6 l-3 -3.500z"/>
<path d="M281 102.500 h6 l-3 3.500z"/><path d="M291 106 h6 l-3 -3.500z"/>
<path d="M784 86.500 h6 l-3 3.500z"/><path d="M794 90 h6 l-3 -3.500z"/>
<path d="M784 102.500 h6 l-3 3.500z"/><path d="M794 106 h6 l-3 -3.500z"/>
<path d="M658.500 93.500 h6 l-3 -3.500z"/><path d="M658.500 99.500 h6 l-3 3.500z"/>
</g>
<g fill="#d8d8e8"><rect x="281" y="90.500" width="6" height="1.500"/><rect x="291" y="90.500" width="6" height="1.500"/><rect x="281" y="106.500" width="6" height="1.500"/><rect x="291" y="106.500" width="6" height="1.500"/>
<rect x="784" y="90.500" width="6" height="1.500"/><rect x="794" y="90.500" width="6" height="1.500"/><rect x="784" y="106.500" width="6" height="1.500"/><rect x="794" y="106.500" width="6" height="1.500"/></g>
<!-- portrait -->
<rect x="321.500" y="89.500" width="9" height="13" fill="#fff" stroke="#54527c"/>
<rect x="322" y="96.500" width="8" height="5.500" fill="#dcdce8"/>
<!-- landscape -->
<rect x="345.500" y="93.500" width="13" height="9" fill="#fff" stroke="#54527c"/>
<rect x="346" y="98.500" width="12" height="3.500" fill="#dcdce8"/>
<!-- pages -->
<g stroke="#54527c" fill="#fff"><rect x="379.500" y="88.500" width="6" height="9"/><rect x="383.500" y="91.500" width="6" height="9"/><rect x="388.500" y="94.500" width="6" height="9"/></g>
<rect x="389" y="99.500" width="5" height="3.500" fill="#dcdce8"/><rect x="384" y="96.500" width="4" height="3.500" fill="#dcdce8"/><rect x="380" y="93.500" width="3" height="3.500" fill="#dcdce8"/>
<!-- facing -->
<g stroke="#54527c" fill="#fff"><rect x="405.500" y="92.500" width="3" height="11"/><rect x="410.500" y="98.500" width="5" height="5"/><rect x="417.500" y="96.500" width="3" height="7"/></g>
<!-- nudge -->
<rect x="585.500" y="92.500" width="6" height="6" fill="#fff" stroke="#3c3c3c"/>
<rect x="587.500" y="94.500" width="2" height="2" fill="none" stroke="#777" stroke-width="0.800"/>
<path d="M586.300 91.700 L588.500 89 L590.700 91.700 Z M586.300 99.300 L588.500 102 L590.700 99.300 Z M584.700 93.300 L582 95.500 L584.700 97.700 Z M592.300 93.300 L595 95.500 L592.300 97.700 Z" fill="#222"/>
<!-- duplicate distance -->
<g fill="none" stroke="#333"><rect x="691.500" y="81.500" width="5" height="6" fill="#fff"/><rect x="694.500" y="84.500" width="5" height="6" fill="#fff"/>
<rect x="691.500" y="98.500" width="5" height="6" fill="#fff"/><rect x="694.500" y="101.500" width="5" height="6" fill="#fff"/>
<path d="M699.500 89.500 l5 5 M704.500 89.500 l-5 5" stroke-width="1.200"/>
<path d="M700 104.500 l2.500 3.500 l2.500 -3.500 M702.500 108 v3" stroke-width="1.200"/></g>
</g>

<!-- ruler extras -->
<g fill="#000" shape-rendering="crispEdges">
<rect x="37" y="126" width="2" height="1"/><rect x="41" y="126" width="2" height="1"/><rect x="45" y="126" width="2" height="1"/>
<rect x="39" y="124" width="1" height="2"/><rect x="39" y="128" width="1" height="2"/><rect x="39" y="132" width="1" height="2"/>
<rect x="833" y="119" width="1" height="3"/><rect x="833" y="125" width="1" height="3"/><rect x="833" y="131" width="1" height="3"/>
<rect x="33" y="481" width="3" height="1"/><rect x="39" y="481" width="3" height="1"/><rect x="45" y="481" width="3" height="1"/>
</g>
<path d="M41.500 128.500 L45 132" stroke="#000" stroke-width="1"/><path d="M46.500 133.500 L46.500 130 L43 133.500 Z" fill="#000"/>
<g font-family="Liberation Sans, sans-serif" font-size="9.500" fill="#000" letter-spacing="-0.35"><text x="1105.500" y="126.800">inches</text>
<text transform="translate(43.800,679.700) rotate(-90)" x="0" y="0">inches</text></g>
<!-- page -->
<rect x="953" y="150" width="6" height="515" fill="#b2b2b2"/>
<path d="M160.5 665 V146.5 H952.5 V665" fill="none" stroke="#8c8c8c" stroke-width="1"/>
<g fill="none" stroke="#ee5c2c" stroke-width="1">
<circle cx="305" cy="293.4" r="140.4"/>
<circle cx="305" cy="293.4" r="99"/>
<circle cx="675" cy="294.5" r="140.4"/>
<circle cx="675" cy="294.5" r="115.6"/>
<circle cx="675" cy="294.5" r="107.4"/>
<circle cx="491.8" cy="502.4" r="132.2"/>
<circle cx="491.8" cy="502.4" r="66"/>
</g>

<!-- ===== page nav ===== -->
<g id="pnav">
<defs><linearGradient id="tg" x1="0" y1="0" x2="0" y2="1"><stop offset="0" stop-color="#f6f6f6"/><stop offset="0.5" stop-color="#ebebeb"/><stop offset="0.5" stop-color="#dddddd"/><stop offset="1" stop-color="#d4d4d4"/></linearGradient>
<linearGradient id="tb" x1="0" y1="0" x2="0" y2="1"><stop offset="0" stop-color="#dcf0fb"/><stop offset="0.5" stop-color="#b4dcf4"/><stop offset="0.5" stop-color="#86c4ec"/><stop offset="1" stop-color="#6cb4e6"/></linearGradient></defs>
<path d="M222.500 682 V666 H284.500 L291.500 682 Z" fill="url(#tg)" stroke="#8a8a8a" stroke-width="1"/>
<path d="M352.500 682 L345.500 666 H407.500 L415 682 Z" fill="url(#tg)" stroke="#8a8a8a" stroke-width="1"/>
<path d="M291.500 682 L284.500 666 H345.500 L352.500 682 Z" fill="url(#tb)" stroke="#8a8a8a" stroke-width="1"/>
<rect x="222" y="682" width="194" height="2" fill="#f0f0f0"/>
<g font-family="Liberation Sans, sans-serif" font-size="12" letter-spacing="-0.15" fill="#000"><text x="237.500" y="678.300">Page 1</text><text x="298.500" y="678.300">Page 2</text><text x="359.500" y="678.300">Page 3</text></g>
<!-- add page icons -->
<g fill="#fff" stroke="#222"><path d="M54.500 667.500 h5 l3 3 v8 h-8z"/><path d="M208.500 667.500 h5 l3 3 v8 h-8z"/></g>
<path d="M56 674.500 h5 M58.500 672 v5 M210 674.500 h5 M212.500 672 v5" stroke="#222" fill="none"/>
<!-- first/prev/next/last -->
<path d="M72 669.500 v8.500" stroke="#111" stroke-width="1.400"/><path d="M79 669.500 v8.500 l-5.500-4.250z" fill="#111"/>
<path d="M96.500 669.500 v8.500 l-5.500-4.250z" fill="#111"/>
<path d="M177 669.500 v8.500 l5.500-4.250z" fill="#111"/>
<path d="M192 669.500 v8.500 l5.500-4.250z" fill="#111"/><path d="M198.500 669.500 v8.500" stroke="#111" stroke-width="1.400"/>
<!-- splitter dots -->
<g fill="#a8a8a8"><rect x="588" y="669" width="2" height="2"/><rect x="588" y="673" width="2" height="2"/><rect x="588" y="677" width="2" height="2"/></g>
<!-- scroll arrows -->
<path d="M604.500 670 v7 l-4.500-3.500z" fill="#222"/>
<path d="M1107 670 v7 l4.500-3.500z" fill="#222"/>
<path d="M1122.500 148 l4-4 l4 4z" fill="#333"/>
<path d="M1122.500 655 l4 4 l4-4z" fill="#333"/>
<g stroke="#555" stroke-width="1"><path d="M862.500 671 v6 M864.500 671 v6 M866.500 671 v6"/><path d="M1123 383.500 h7 M1123 385.500 h7 M1123 387.500 h7 M1123 389.500 h7"/></g>
<!-- navigator -->
<circle cx="1124.500" cy="672.500" r="4.500" fill="#fff" stroke="#3c3a60" stroke-width="1.200"/>
<circle cx="1124.500" cy="672.500" r="1.800" fill="none" stroke="#6a68a0" stroke-width="1"/>
<path d="M1128 676 l4 4" stroke="#222" stroke-width="1.800"/>
</g>

<!-- ===== toolbox ===== -->
<g id="tools">
<g fill="#b4b4b4"><rect x="6" y="121" width="2" height="1.500"/><rect x="10" y="121" width="2" height="1.500"/><rect x="14" y="121" width="2" height="1.500"/><rect x="18" y="121" width="2" height="1.500"/><rect x="22" y="121" width="2" height="1.500"/></g>
<defs><linearGradient id="pk" x1="0" y1="0" x2="0" y2="1"><stop offset="0" stop-color="#d2d2d2"/><stop offset="0.35" stop-color="#e4e4e4"/><stop offset="1" stop-color="#ededed"/></linearGradient></defs>
<rect x="3.500" y="127.500" width="23" height="23" rx="3.500" fill="url(#pk)" stroke="#6e6e6e"/>
<!-- pick arrow -->
<path d="M11.500 131.500 V144.500 L14.500 141.800 L16.800 147 L18.800 146 L16.600 141 L20.500 140.600 Z" fill="#fff" stroke="#54527c" stroke-width="1"/>
<!-- shape -->
<path d="M12.500 157.500 C10.500 162 10.500 168 12.500 173" fill="none" stroke="#54527c" stroke-width="1.200"/>
<rect x="9.500" y="161.500" width="3" height="3" fill="#fff" stroke="#222"/>
<path d="M14 164.500 L20.500 167.500 L16 171.500 Z" fill="#1c1c2c"/>
<path d="M25.5 174.0 V169.0 L20.500 174.0 Z" fill="#111"/>
<!-- crop -->
<g stroke="#3a3858" stroke-width="1.800" fill="none"><path d="M12 184 V195 H22"/><path d="M8.500 187.500 H19 V198"/></g>
<path d="M21.500 184.500 L12.500 193.500" stroke="#3a3858" stroke-width="1.200"/>
<path d="M25.5 201.0 V196.0 L20.500 201.0 Z" fill="#111"/>
<!-- zoom -->
<circle cx="13" cy="216.500" r="5.500" fill="#fff" stroke="#54527c" stroke-width="1.200"/>
<path d="M8 217 h10 a5 5 0 0 1 -10 0z" fill="#d0d0e0"/>
<path d="M17 220.500 L22.500 226" stroke="#222" stroke-width="2.200"/>
<path d="M25.5 227.5 V222.5 L20.500 227.5 Z" fill="#111"/>
<!-- freehand -->
<path d="M14.700 238 L18 248 H11.500 Z" fill="#fff" stroke="#54527c" stroke-width="1"/>
<path d="M14.700 238 V246" stroke="#54527c" stroke-width="0.800"/>
<rect x="10.500" y="247.500" width="8.500" height="3" fill="#1e1c3c"/>
<path d="M25.5 254.0 V249.0 L20.500 254.0 Z" fill="#111"/>
<!-- smart fill -->
<path d="M7.500 264.500 l4-3.500 l4 4 l-4 4 z" fill="#fff" stroke="#3a3858"/>
<path d="M8.500 265 l3 3.500 l3-3 z" fill="#e87800"/>
<path d="M10.500 259.500 l3 3" stroke="#3a3858"/>
<g fill="#fff" stroke="#54527c"><rect x="13.500" y="271.500" width="7" height="5"/><rect x="15.500" y="269.500" width="7" height="5"/></g>
<path d="M15 266 V272.500 H20" fill="none" stroke="#e87800" stroke-width="2"/>
<path d="M25.5 278.5 V273.5 L20.500 278.5 Z" fill="#111"/>
<!-- rectangle -->
<rect x="9.500" y="290.500" width="11" height="11" fill="#fff" stroke="#54527c" stroke-width="1.200"/>
<rect x="10.200" y="296.500" width="9.600" height="4.300" fill="#dcdce8"/>
<path d="M25.5 305.0 V300.0 L20.500 305.0 Z" fill="#111"/>
<!-- ellipse -->
<circle cx="14.800" cy="321.700" r="5.600" fill="#fff" stroke="#54527c" stroke-width="1.200"/>
<path d="M9.800 323 h10 a5.200 5.200 0 0 1 -10 0z" fill="#dcdce8"/>
<path d="M25.5 331.0 V326.0 L20.500 331.0 Z" fill="#111"/>
<!-- polygon -->
<path d="M8 347.700 L11.500 342 H18.500 L22 347.700 L18.500 353.500 H11.500 Z" fill="#fff" stroke="#54527c" stroke-width="1.200"/>
<path d="M8.800 348.500 H21.200 L18.200 352.800 H11.800 Z" fill="#dcdce8"/>
<path d="M25.5 357.0 V352.0 L20.500 357.0 Z" fill="#111"/>
<!-- basic shapes -->
<path d="M8.500 371 V377.500 H15 Z" fill="#fff" stroke="#54527c"/>
<circle cx="15.200" cy="369.400" r="4" fill="#fff" stroke="#54527c"/>
<rect x="14.500" y="372.500" width="7.500" height="6.500" fill="#e4e4ee" stroke="#54527c"/>
<path d="M25.5 383.0 V378.0 L20.500 383.0 Z" fill="#111"/>
<!-- text -->
<path d="M8.500 406 L13 393 H17.500 L22 406 H18.200 L17.300 403 H13.200 L12.300 406 Z M14 400 H16.500 L15.250 396 Z" fill="#f4f4f8" stroke="#6a6890" stroke-width="1.100" fill-rule="evenodd"/>
<!-- table -->
<rect x="8.500" y="420.500" width="13" height="12" fill="#ececf4" stroke="#54527c"/>
<path d="M8.500 423.500 h13 M8.500 426.500 h13 M8.500 429.500 h13 M11.500 420.500 v12 M15 420.500 v12 M18.500 420.500 v12" stroke="#8482a6" stroke-width="0.900" fill="none"/>
<!-- blend -->
<rect x="8.500" y="444.500" width="4" height="4" fill="#fff" stroke="#54527c"/>
<rect x="11.500" y="447.500" width="6.500" height="6.500" fill="#fcc860" stroke="#54527c"/>
<rect x="15.500" y="451.500" width="7" height="7" fill="#f85800" stroke="#54527c"/>
<path d="M25.5 461.5 V456.5 L20.500 461.5 Z" fill="#111"/>
<!-- eyedropper -->
<path d="M8.500 484 L10 480 L16 474 L18.500 476.500 L12.500 482.500 Z" fill="#8cc0b0" stroke="#2c5c54" stroke-width="0.800"/>
<path d="M15 472.500 L20 477.500" stroke="#1a1a2c" stroke-width="2.400"/>
<path d="M17.500 475 L21.500 471" stroke="#1a1a2c" stroke-width="3.600" stroke-linecap="round"/>
<path d="M25.5 487.5 V482.5 L20.500 487.5 Z" fill="#111"/>
<!-- outline pen -->
<path d="M14.800 496.500 C12.500 499.500 11 503 12.500 507 H17.100 C18.600 503 17.100 499.500 14.800 496.500 Z" fill="#fff" stroke="#54527c" stroke-width="1"/>
<path d="M14.800 500 V505" stroke="#54527c" stroke-width="0.800"/>
<rect x="11" y="507.500" width="7.600" height="2.500" fill="#1e1c3c"/>
<path d="M25.5 513.5 V508.5 L20.500 513.5 Z" fill="#111"/>
<!-- fill bucket -->
<path d="M7 529 L14 522.500 L20.500 529 L13.500 536 Z" fill="#fff" stroke="#3a3858" stroke-width="1.200"/>
<path d="M8 529.500 H20 L13.500 535.500 Z" fill="#e87800"/>
<path d="M13 520.500 l2.500 3" stroke="#3a3858" stroke-width="1.200"/>
<path d="M19.500 528 C22 528 22 530 22 534" fill="none" stroke="#e87800" stroke-width="1.800"/>
<path d="M25.5 539.5 V534.5 L20.500 539.5 Z" fill="#111"/>
<!-- interactive fill -->
<path d="M9.500 552.500 l4-3.500 l3.500 3.500 l-4 4 z" fill="#fff" stroke="#3a3858"/>
<path d="M10.500 553 l2.800 3 l2.800-3 z" fill="#e87800"/>
<path d="M12.500 548 l2 2.500" stroke="#3a3858"/>
<defs><linearGradient id="ifg" x1="0" y1="0" x2="0" y2="1"><stop offset="0" stop-color="#fff0c0"/><stop offset="1" stop-color="#f0a020"/></linearGradient></defs>
<path d="M17.500 556 L21 563 H14 Z" fill="url(#ifg)"/>
<path d="M25.5 565.5 V560.5 L20.500 565.5 Z" fill="#111"/>
</g>

<!-- ===== docker icons ===== -->
<g id="dockicons">
<!-- >> -->
<path d="M1290 122.500 l3 3 l-3 3 M1294.500 122.500 l3 3 l-3 3" fill="none" stroke="#3c3c50" stroke-width="1.300"/>
<!-- close X -->
<path d="M1331 121.500 l7 7 M1338 121.500 l-7 7" stroke="#fff" stroke-width="2.600"/>
<path d="M1331 121.500 l7 7 M1338 121.500 l-7 7" stroke="#60504c" stroke-width="3.800" opacity="0.350"/>
<path d="M1331 121.500 l7 7 M1338 121.500 l-7 7" stroke="#fff" stroke-width="2.200"/>
<!-- tab icons: fill bucket -->
<path d="M1151 158.500 L1158 152 L1164.500 158.500 L1157.500 165.500 Z" fill="#fff" stroke="#3a3858" stroke-width="1.200"/>
<path d="M1152 159 H1164 L1157.500 165 Z" fill="#e87800"/>
<path d="M1157 150 l2.500 3" stroke="#3a3858" stroke-width="1.200"/>
<path d="M1163.500 157.500 C1166 157.500 1166 159.500 1166 164" fill="none" stroke="#e87800" stroke-width="1.800"/>
<!-- pen nib -->
<path d="M1180.800 151 C1178.500 154 1177 157.500 1178.500 161.500 H1183.100 C1184.600 157.500 1183.100 154 1180.800 151 Z" fill="#fff" stroke="#54527c" stroke-width="1"/>
<path d="M1180.800 154.500 V159.500" stroke="#54527c" stroke-width="0.800"/>
<rect x="1177" y="162" width="7.600" height="2.500" fill="#1e1c3c"/>
<!-- page -->
<path d="M1196.500 151.500 H1203.500 L1207.500 155.500 V165.500 H1196.500 Z" fill="#fff" stroke="#54527c"/>
<path d="M1203.500 151.500 V155.500 H1207.500" fill="none" stroke="#54527c"/>
<rect x="1197" y="158.500" width="10" height="6.500" fill="#dcdce8"/>
<!-- list -->
<g fill="#2c2a4c"><rect x="1217" y="152" width="4" height="2"/><rect x="1217" y="158" width="4" height="2"/><rect x="1217" y="164" width="4" height="2"/></g>
<g fill="#fff" stroke="#54527c"><rect x="1223.500" y="151.500" width="8" height="3"/><rect x="1223.500" y="157.500" width="8" height="3"/><rect x="1223.500" y="163.500" width="8" height="3"/></g>
<!-- combo arrows -->
<path d="M1281 186 h7 l-3.500 4 z" fill="#000"/>
<path d="M1216.500 217 h7 l-3.500 4 z" fill="#000"/>
<path d="M1283.500 253 h7 l-3.500 4 z" fill="#000"/>
<path d="M1226.500 295 h7 l-3.500 4 z" fill="#000"/>
<path d="M1283.500 295 h7 l-3.500 4 z" fill="#000"/>
<!-- lock -->
<rect x="1207.500" y="662" width="11" height="8" rx="1" fill="#3c3870" stroke="#28244c"/>
<path d="M1209.800 662 v-2.500 a3.200 3.200 0 0 1 6.400 0 v2.500" fill="none" stroke="#28244c" stroke-width="1.600"/>
<rect x="1212.300" y="664.500" width="1.400" height="3" fill="#c0c0e0"/>
<!-- vertical tab icons -->
<path d="M1324.500 159 L1329.300 146 H1332.700 L1337.500 159 H1334.300 L1333.400 156.300 H1328.600 L1327.700 159 Z M1329.600 153.800 H1332.400 L1331 149.500 Z" fill="#f4f4f8" stroke="#6a6890" stroke-width="1.100" fill-rule="evenodd"/>
<path d="M1322.500 146.500 h3 M1324 145 v3 M1336.500 146.500 h3 M1338 145 v3" stroke="#222" stroke-width="1"/>
<g><rect x="1331.500" y="279.500" width="9" height="11" fill="#c8c8dc" stroke="#6a6890"/><path d="M1331.500 279.500 l9 11 M1340.500 279.500 l-9 11" stroke="#6a6890"/>
<path d="M1326.500 281 l3.500-3 l3.500 3.500 l-3.500 3.500 z" fill="#fff" stroke="#3a3858" stroke-width="0.900"/><path d="M1327.500 281.500 l2.500 2.500 l2.500-2.500z" fill="#e87800"/></g>
<path d="M1329 390.500 l7 7 M1336 390.500 l-7 7" stroke="#808080" stroke-width="2"/>
<!-- palette top -->
<g fill="#c0c0c0"><rect x="1352" y="120" width="2" height="1.500"/><rect x="1356" y="120" width="2" height="1.500"/><rect x="1360" y="120" width="2" height="1.500"/></g>
<circle cx="1355.700" cy="133" r="6" fill="#f8f8f8" stroke="#b0b0b0"/>
<path d="M1353.800 129.800 v6.400 l5-3.200z" fill="#111"/>
<path d="M1352.500 153 l3.800-4 l3.800 4z" fill="#8a8a8a"/>
<rect x="1348.500" y="160.500" width="16" height="14" fill="#fff" stroke="#000"/>
<path d="M1348.500 160.500 l16 14 M1364.500 160.500 l-16 14" stroke="#000" stroke-width="1"/>
<path d="M1352.500 642.500 h7.500 l-3.750 4z" fill="#444"/>
<path d="M1352.800 657.500 v8.500" stroke="#111" stroke-width="1.500"/><path d="M1360 657.500 v8.500 l-5.500-4.250z" fill="#111"/>
</g>
<!-- ===== status icons ===== -->
<g id="staticons">
<path d="M1162 696.500 L1169 690 L1175.500 696.500 L1168.500 703.500 Z" fill="#fff" stroke="#3a3858" stroke-width="1.200"/>
<path d="M1163 697 H1175 L1168.500 703 Z" fill="#e87800"/>
<path d="M1168 688 l2.500 3" stroke="#3a3858" stroke-width="1.200"/>
<path d="M1174.500 695.500 C1177 695.500 1177 697.500 1177 702" fill="none" stroke="#e87800" stroke-width="1.800"/>
<rect x="1182.500" y="687.500" width="17" height="17" fill="#0a86e0" stroke="#c8c8c8"/>
<path d="M1170.300 709.500 C1168 712.500 1166.500 716 1168 720 H1172.600 C1174.100 716 1172.600 712.500 1170.300 709.500 Z" fill="#fff" stroke="#54527c" stroke-width="1"/>
<path d="M1170.300 713 V718" stroke="#54527c" stroke-width="0.800"/>
<rect x="1166.500" y="720.500" width="7.600" height="2.500" fill="#1e1c3c"/>
<rect x="1182.500" y="706.500" width="17" height="21" fill="#23201b" stroke="#c8c8c8"/>
</g>

<!-- ===== title/menu icons ===== -->
<g id="titleicons">
<rect x="0" y="3" width="16" height="16" fill="#79b52a"/>
<path d="M0.800 6.200 L3.200 4 L8.600 4 L12.400 7.200 L12.600 10.500 L13.700 17.700 L7.500 13.800 L3 12.300 Z" fill="#fff"/>
<path d="M1.500 8.300 L4.500 11.200 M3.300 6 L7.300 9.800 L11.500 8" fill="none" stroke="#79b52a" stroke-width="1.200"/>
<path d="M11.600 15 L13.800 17.800 L13.400 14.800 Z" fill="#2c4c10"/>
<!-- menu doc icon -->
<path d="M4.500 26.500 H11 L15.500 31 V42.500 H4.500 Z" fill="#79b52a" stroke="#3c3c3c" stroke-width="1"/>
<path d="M11 26.500 V31 H15.500 Z" fill="#fff"/>
<path d="M5.500 28 L7.500 27.500 L10 31.500 L12 34 L13.300 40.500 L8 37.500 L6 34.500 Z" fill="#fff"/>
<path d="M7 31 L8.500 33.500 L11 32.500" fill="none" stroke="#79b52a" stroke-width="1.100"/>
<path d="M11.500 38.500 L13.500 40.800 L13.200 38.500 Z" fill="#2c4c10"/>
<!-- win controls glyphs -->
<rect x="1269.500" y="8.500" width="11" height="4" fill="#fff" stroke="#565064"/>
<rect x="1297.500" y="2.500" width="9" height="9" rx="1" fill="#f4eef4" stroke="#565064" stroke-width="1.200"/>
<rect x="1295.500" y="5" width="9" height="8.500" rx="1" fill="#fff" stroke="#565064" stroke-width="1.200"/>
<rect x="1298.500" y="8" width="3" height="2.800" fill="#e8dde8" stroke="#565064" stroke-width="1"/>
<path d="M1335.500 4 L1343.800 12 M1343.800 4 L1335.500 12" stroke="#5c3a3c" stroke-width="4.200"/>
<path d="M1335.500 4 L1343.800 12 M1343.800 4 L1335.500 12" stroke="#fff" stroke-width="2.700"/>
<!-- menu controls -->
<rect x="1312" y="34.800" width="8" height="2.200" fill="#c8c8c8"/>
<path d="M1333.500 31.500 V29.800 H1338.700 V34.800 H1337" fill="none" stroke="#c8c8c8" stroke-width="1.400"/>
<rect x="1330.800" y="31" width="6.400" height="6" fill="#c8c8c8"/>
<rect x="1333" y="33.200" width="2" height="2" fill="#1a1a1a"/>
<path d="M1351 31.500 L1356.500 36.800 M1356.500 31.500 L1351 36.800" stroke="#c8c8c8" stroke-width="2"/>
</g>
</svg>
</body></html>
